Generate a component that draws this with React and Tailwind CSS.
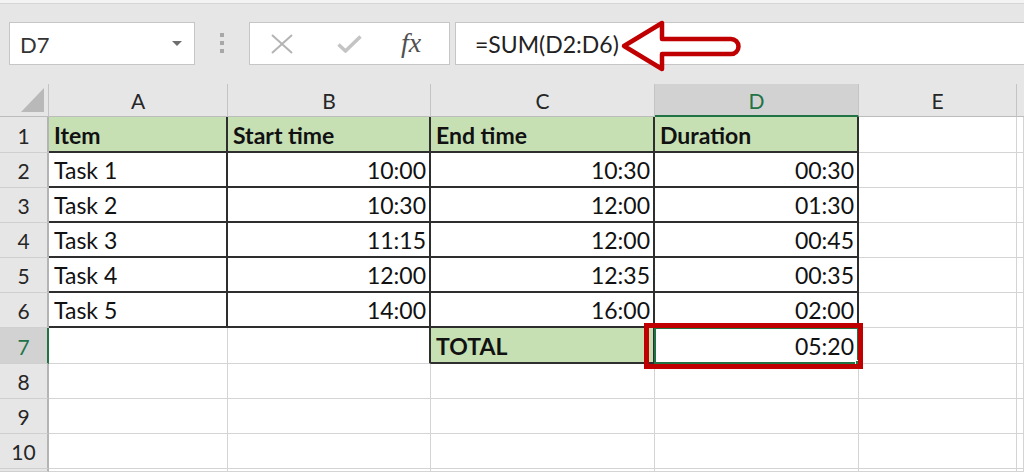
import React from 'react';

// Excel sheet: task durations summed in D7
const COLS = ['A', 'B', 'C', 'D', 'E'];

const DATA = [
  ['Item', 'Start time', 'End time', 'Duration'],
  ['Task 1', '10:00', '10:30', '00:30'],
  ['Task 2', '10:30', '12:00', '01:30'],
  ['Task 3', '11:15', '12:00', '00:45'],
  ['Task 4', '12:00', '12:35', '00:35'],
  ['Task 5', '14:00', '16:00', '02:00'],
];

const GRID = 'bg-white border-r border-b border-r-[#d4d4d4] border-b-[#d4d4d4]';
const BOX = 'bg-white border-r-2 border-b-2 border-r-[#2e2e2e] border-b-[#2e2e2e]';
const HEAD = 'bg-[#c6e0b4] font-bold border-r-2 border-b-2 border-r-[#2e2e2e] border-b-[#2e2e2e]';

function Cell({ className, align, children }) {
  return (
    <div
      className={`flex items-center pt-[2px] text-[23px] text-[#111] overflow-hidden whitespace-nowrap ${
        align === 'right' ? 'justify-end pr-[3px]' : 'pl-[5px]'
      } ${className}`}
    >
      {children}
    </div>
  );
}

function RowHead({ n, active }) {
  return (
    <div
      className={`flex items-center justify-center pt-[2px] text-[21px] border-b border-b-[#cfcfcf] border-r-2 ${
        active ? 'bg-[#d2d2d2] text-[#217346] border-r-[#217346]' : 'bg-[#e6e6e6] text-[#262626] border-r-[#b4b4b4]'
      }`}
    >
      {n}
    </div>
  );
}

export default function App() {
  return (
    <div className="relative w-[1024px] h-[472px] overflow-hidden bg-[#e6e6e6] font-['Lato',sans-serif]">
      {/* title strip */}
      <div className="h-[4px] bg-[#f3f3f3] border-b border-b-[#d6d6d6]" />

      {/* name box + formula bar */}
      <div className="h-[80px] flex items-start pt-[18px]">
        <div className="ml-[9px] w-[186px] h-[43px] bg-white border border-[#c6c6c6] flex items-center justify-between pl-[10px] pr-[12px]">
          <span className="text-[22px] text-[#333] pt-[1px]">D7</span>
          <svg width="10" height="5" viewBox="0 0 10 5">
            <path d="M0 0 L10 0 L5 5 Z" fill="#6e6e6e" />
          </svg>
        </div>

        <div className="ml-[25px] mt-[11px] flex flex-col gap-[4px]">
          <div className="w-[4px] h-[4px] bg-[#a8a8a8]" />
          <div className="w-[4px] h-[4px] bg-[#a8a8a8]" />
          <div className="w-[4px] h-[4px] bg-[#a8a8a8]" />
        </div>

        <div className="ml-[25px] w-[201px] h-[43px] bg-white border border-[#c6c6c6] flex items-center">
          <svg className="ml-[21px]" width="22" height="20" viewBox="0 0 22 20">
            <path d="M1 1 L21 19 M21 1 L1 19" stroke="#b4b4b4" strokeWidth="2" />
          </svg>
          <svg className="ml-[44px]" width="25" height="18" viewBox="0 0 25 18">
            <path d="M1.5 9.5 L8.5 16 L23.5 1.5" stroke="#c4c4c4" strokeWidth="3.5" fill="none" />
          </svg>
          <span className="ml-[39px] font-['Liberation_Serif',serif] italic text-[28px] text-[#505050] leading-none pb-[2px]">
            fx
          </span>
        </div>

        <div className="ml-[5px] flex-1 h-[43px] bg-white border border-r-0 border-[#c6c6c6] flex items-center pl-[19px] pt-[1px] text-[23px] text-[#222]">
          =SUM(D2:D6)
        </div>
      </div>

      {/* sheet */}
      <div className="grid grid-cols-[49px_179px_203px_224px_204px_158px_1fr] grid-rows-[33px_36px_35px_35px_35px_35px_35px_36px_35px_35px_35px_1fr] h-[388px]">
        {/* column headers */}
        <div className="relative bg-[#e6e6e6] border-r border-b border-r-[#c4c4c4] border-b-[#bcbcbc]">
          <svg className="absolute left-[21px] top-[4px]" width="24" height="24" viewBox="0 0 24 24">
            <path d="M23 0 L23 24 L0 24 Z" fill="#b9b9b9" />
          </svg>
        </div>
        {COLS.map((c) =>
          c === 'D' ? (
            <div
              key={c}
              className="flex items-center justify-center pt-[2px] text-[21px] text-[#217346] bg-[#d2d2d2] border-r border-b-2 border-r-[#c4c4c4] border-b-[#217346]"
            >
              {c}
            </div>
          ) : (
            <div
              key={c}
              className="flex items-center justify-center pt-[2px] text-[21px] text-[#262626] bg-[#e6e6e6] border-r border-b border-r-[#c4c4c4] border-b-[#bcbcbc]"
            >
              {c}
            </div>
          )
        )}
        <div className="bg-[#e6e6e6] border-b border-b-[#bcbcbc]" />

        {/* rows 1-6: bordered table */}
        {DATA.map((row, i) => (
          <React.Fragment key={i}>
            <RowHead n={i + 1} />
            {row.map((v, j) => (
              <Cell key={j} className={i === 0 ? HEAD : BOX} align={i > 0 && j > 0 ? 'right' : 'left'}>
                {v}
              </Cell>
            ))}
            <Cell className={GRID} />
            <Cell className={GRID} />
          </React.Fragment>
        ))}

        {/* row 7: total */}
        <RowHead n={7} active />
        <Cell className={GRID} />
        <Cell className="bg-white border-r-2 border-b border-r-[#2e2e2e] border-b-[#d4d4d4]" />
        <Cell className={HEAD}>TOTAL</Cell>
        <div className="relative">
          <Cell className={`${BOX} h-full`} align="right">
            05:20
          </Cell>
          <div className="absolute -left-[1px] -top-[1px] right-0 bottom-0 border-2 border-[#217346]" />
          <div className="absolute -right-[2px] -bottom-[2px] w-[6px] h-[6px] bg-[#217346] border border-white" />
        </div>
        <Cell className={GRID} />
        <Cell className={GRID} />

        {/* rows 8-10 + partial 11 */}
        {[8, 9, 10, ''].map((n) => (
          <React.Fragment key={n || 'x'}>
            <RowHead n={n} />
            <Cell className={GRID} />
            <Cell className={GRID} />
            <Cell className={GRID} />
            <Cell className={GRID} />
            <Cell className={GRID} />
            <Cell className={GRID} />
          </React.Fragment>
        ))}
      </div>

      {/* annotation: arrow pointing at the formula */}
      <svg
        className="absolute left-[615px] top-[15px] pointer-events-none"
        width="135"
        height="62"
        viewBox="615 15 135 62"
      >
        <path
          d="M624 46 L662 23 L662 39 L731 39 A7.5 7.5 0 0 1 731 54 L662 54 L662 69 Z"
          fill="none"
          stroke="#c00000"
          strokeWidth="4.5"
          strokeLinejoin="round"
        />
      </svg>

      {/* annotation: red box around the result */}
      <div className="absolute left-[644px] top-[323px] w-[219px] h-[46px] border-[5px] border-[#c00000] pointer-events-none" />
    </div>
  );
}
